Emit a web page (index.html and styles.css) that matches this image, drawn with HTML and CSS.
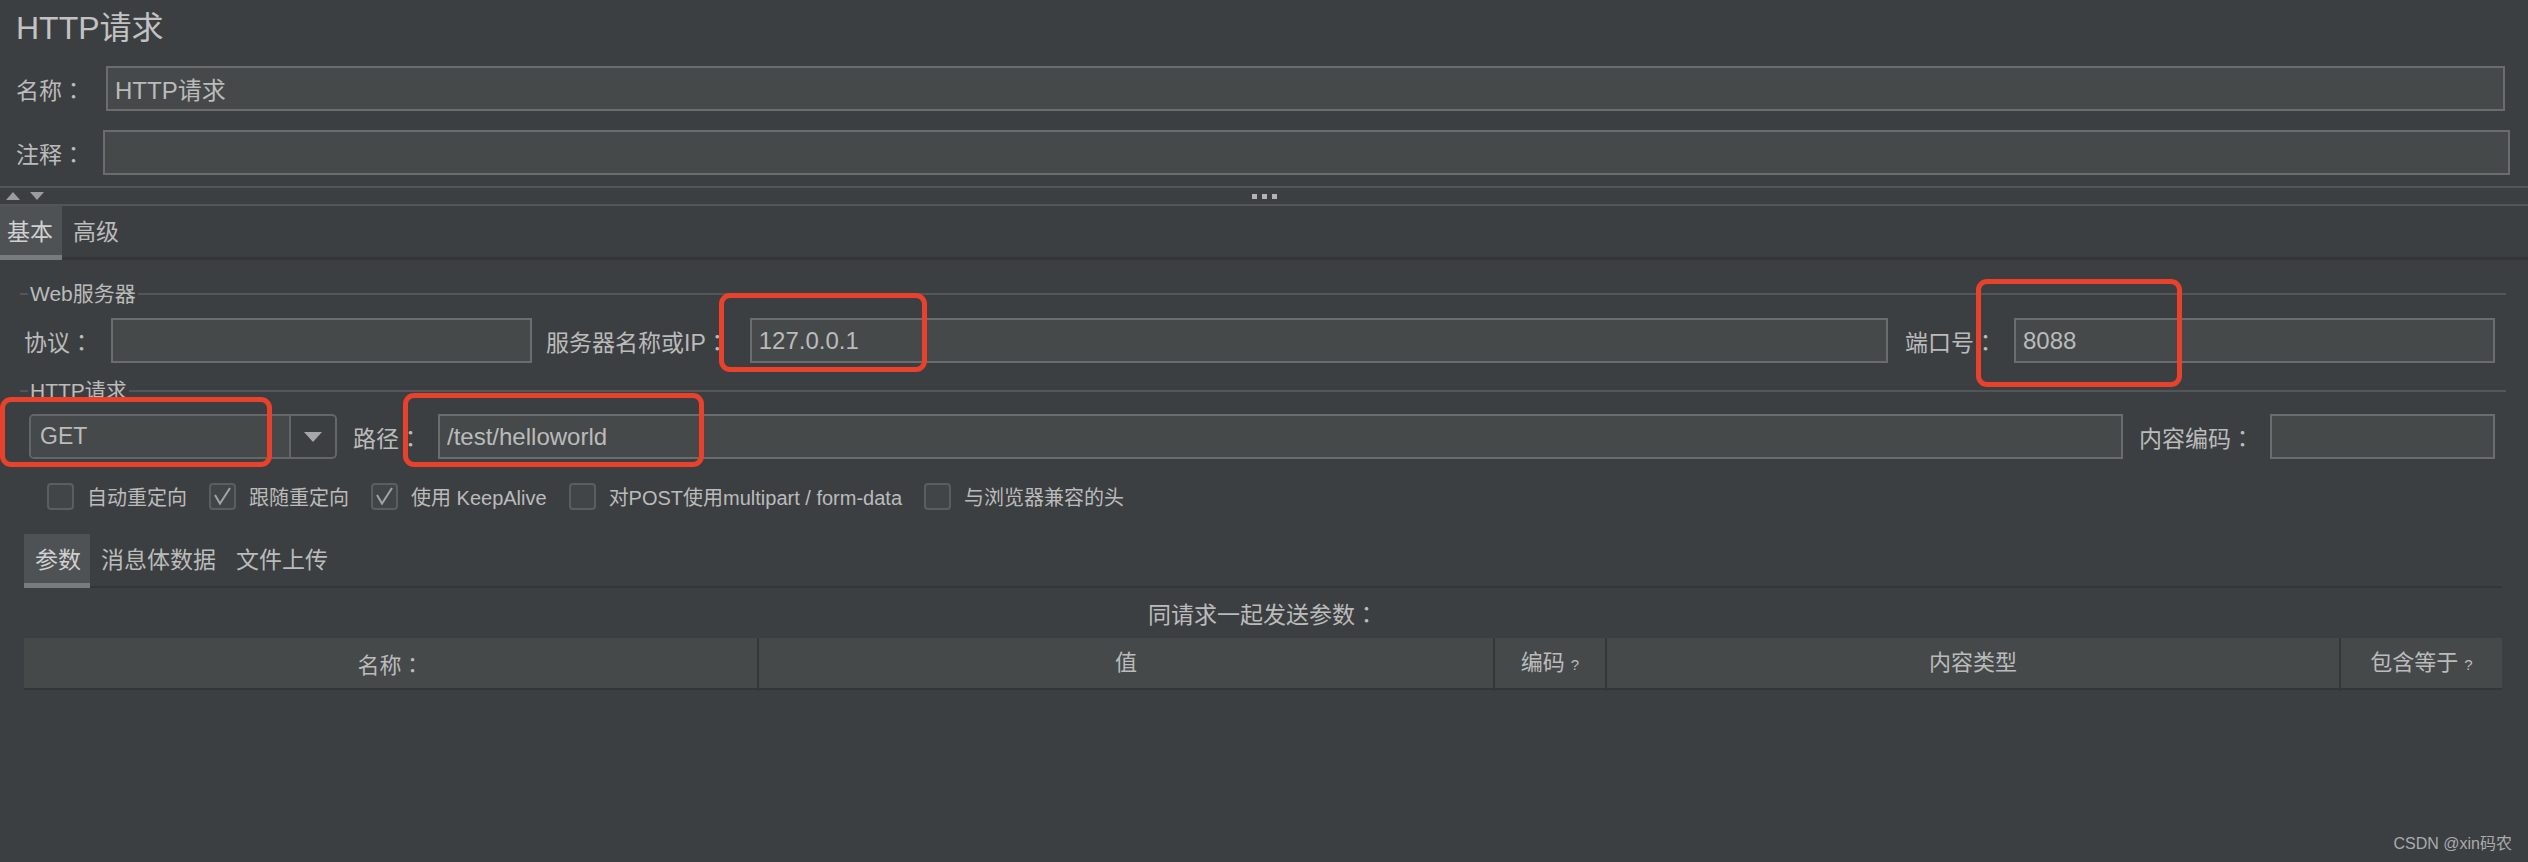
FILE: index.html
```html
<!DOCTYPE html>
<html lang="zh-CN">
  <head>
    <meta charset="UTF-8" />
    <meta name="viewport" content="width=device-width, initial-scale=1.0" />
    <title>HTTP请求</title>
    <link rel="stylesheet" href="styles.css">
  </head>

  <body>
    <div class="page">
      <h1 class="title">HTTP请求</h1>

      <div class="field-row name-row">
        <label class="lbl">名称<span class="colon" lang="zh-TW">：</span></label>
        <input class="input" type="text" value="HTTP请求" />
      </div>
      <div class="field-row comment-row">
        <label class="lbl">注释<span class="colon" lang="zh-TW">：</span></label>
        <input class="input" type="text" value="" />
      </div>

      <div class="splitter">
        <svg class="arrows" width="40" height="8" viewBox="0 0 40 8">
          <polygon points="0,8 7,0 14,8" />
          <polygon points="24,0 38,0 31,8" />
        </svg>
        <span class="grip"><i></i><i></i><i></i></span>
        <span></span>
      </div>

      <div class="tabs top-tabs">
        <span class="tab active">基本</span>
        <span class="tab">高级</span>
      </div>

      <div class="basic">
        <fieldset class="group web-group">
          <legend>Web服务器</legend>
          <div class="row server-row">
            <label class="lbl">协议<span class="colon" lang="zh-TW">：</span></label>
            <input class="input protocol" type="text" value="" />
            <label class="lbl gap-l">服务器名称或IP<span class="colon" lang="zh-TW">：</span></label>
            <input class="input grow" type="text" value="127.0.0.1" />
            <label class="lbl gap-l2">端口号<span class="colon" lang="zh-TW">：</span></label>
            <input class="input port" type="text" value="8088" />
          </div>
        </fieldset>

        <fieldset class="group http-group">
          <legend>HTTP请求</legend>
          <div class="row method-row">
            <div class="combo">
              <span class="combo-value">GET</span>
              <span class="combo-btn">
                <svg width="18" height="10" viewBox="0 0 18 10"><polygon points="0,0 18,0 9,10" /></svg>
              </span>
            </div>
            <label class="lbl gap-m">路径<span class="colon" lang="zh-TW">：</span></label>
            <input class="input grow" type="text" value="/test/helloworld" />
            <label class="lbl gap-m">内容编码<span class="colon" lang="zh-TW">：</span></label>
            <input class="input encoding" type="text" value="" />
          </div>

          <div class="checks">
            <span class="check-item"><span class="box"></span>自动重定向</span>
            <span class="check-item"><span class="box checked"><svg width="27" height="27" viewBox="0 0 27 27"><polyline points="6,12 11,20.5 21,5" /></svg></span>跟随重定向</span>
            <span class="check-item"><span class="box checked"><svg width="27" height="27" viewBox="0 0 27 27"><polyline points="6,12 11,20.5 21,5" /></svg></span>使用 KeepAlive</span>
            <span class="check-item"><span class="box"></span>对POST使用multipart / form-data</span>
            <span class="check-item"><span class="box"></span>与浏览器兼容的头</span>
          </div>

          <div class="tabs sub-tabs">
            <span class="tab active">参数</span>
            <span class="tab">消息体数据</span>
            <span class="tab">文件上传</span>
          </div>

          <div class="params-title">同请求一起发送参数<span class="colon" lang="zh-TW">：</span></div>

          <div class="params-head">
            <span class="col">名称<span class="colon" lang="zh-TW">：</span></span>
            <span class="col">值</span>
            <span class="col">编码<small>?</small></span>
            <span class="col">内容类型</span>
            <span class="col">包含等于<small>?</small></span>
          </div>
        </fieldset>
      </div>

      <!-- annotation marks drawn over the form -->
      <div class="mark mark-method"></div>
      <div class="mark mark-path"></div>
      <div class="mark mark-ip"></div>
      <div class="mark mark-port"></div>

      <div class="watermark">CSDN @xin码农</div>
    </div>
  </body>
</html>
```

FILE: styles.css
```css
body {
  margin: 0;
  background-color: #3c3f41;
  overflow: hidden;
}

.page {
  position: relative;
  height: 862px;
  color: #bbbbbb;
  font-family: "Liberation Sans", "Noto Sans CJK SC", sans-serif;
  font-size: 23px;
}

/* full-width colon drawn centred in its cell */
.colon {
  font-family: "Noto Sans CJK TC", "Noto Sans CJK SC", sans-serif;
}

.title {
  margin: 0;
  padding-left: 16px;
  height: 56px;
  line-height: 56px;
  font-size: 32px;
  font-weight: normal;
  color: #c2c2c2;
}

/* text boxes */
.input {
  box-sizing: border-box;
  height: 45px;
  margin: 0;
  padding: 0 7px;
  border: 2px solid #6a6c6e;
  background-color: #45494a;
  color: #bbbbbb;
  font-family: inherit;
  font-size: 24px;
  outline: none;
  min-width: 0;
}

.lbl {
  white-space: nowrap;
  flex: none;
}

.field-row {
  display: flex;
  align-items: center;
  padding-left: 16px;
}

.field-row .input {
  flex: 1;
}

.name-row {
  margin-top: 10px;
  padding-right: 23px;
}

.name-row .lbl {
  width: 90px;
}

.comment-row {
  margin-top: 19px;
  padding-right: 18px;
}

.comment-row .lbl {
  width: 87px;
}

/* split handle */
.splitter {
  display: grid;
  grid-template-columns: 1fr auto 1fr;
  align-items: center;
  margin-top: 11px;
  height: 16px;
  border-top: 2px solid #535557;
  border-bottom: 2px solid #535557;
}

.arrows {
  display: block;
  margin-left: 6px;
  fill: #9a9c9e;
}

.grip {
  display: flex;
  gap: 5px;
}

.grip i {
  width: 5px;
  height: 5px;
  background-color: #b3b3b3;
}

/* tabs */
.tabs {
  display: flex;
  align-items: flex-start;
  box-sizing: border-box;
  height: 54px;
}

.top-tabs {
  gap: 4px;
  border-bottom: 3px solid #333537;
}

.tab {
  box-sizing: border-box;
  height: 51px;
  padding: 3px 9px 0 7px;
  line-height: 46px;
  white-space: nowrap;
}

.tab.active {
  height: 54px;
  background-color: #4e5254;
  border-bottom: 5px solid #787b7e;
  color: #d0d0d0;
}

.top-tabs .tab.active {
  margin-bottom: -3px;
}

/* basic panel */
.basic {
  padding: 0 22px 0 20px;
}

.group {
  margin: 20px 0 0;
  padding: 0;
  border: 0;
  border-top: 2px solid #535557;
  min-width: 0;
}

.http-group {
  margin-top: 14px;
}

.group legend {
  margin-left: 8px;
  padding: 0 2px;
  font-size: 21px;
  line-height: 28px;
}

.row {
  display: flex;
  align-items: center;
  padding-right: 11px;
}

.row .grow {
  flex: 1;
}

.server-row {
  margin-top: 10px;
  padding-left: 4px;
}

.server-row .lbl {
  margin-right: 18px;
}

.server-row .gap-l {
  margin-left: 14px;
  margin-right: 21px;
}

.server-row .gap-l2 {
  margin-left: 17px;
  margin-right: 17px;
}

.protocol {
  width: 421px;
}

.port {
  width: 481px;
}

.method-row {
  margin-top: 9px;
  padding-left: 9px;
}

.gap-m {
  margin-left: 16px;
  margin-right: 16px;
}

.encoding {
  width: 225px;
}

.combo {
  display: flex;
  box-sizing: border-box;
  width: 308px;
  height: 45px;
  border: 2px solid #646668;
  border-radius: 5px;
  overflow: hidden;
  flex: none;
}

.combo-value {
  flex: 1;
  padding-left: 9px;
  line-height: 41px;
  background-color: #45494a;
  border-right: 2px solid #646668;
}

.combo-btn {
  display: flex;
  align-items: center;
  justify-content: center;
  width: 44px;
  fill: #a5a7a9;
}

/* checkboxes */
.checks {
  display: flex;
  align-items: center;
  gap: 22px;
  margin-top: 23px;
  padding-left: 27px;
  font-size: 20px;
}

.check-item {
  display: flex;
  align-items: center;
  gap: 13px;
  white-space: nowrap;
}

.box {
  box-sizing: border-box;
  width: 27px;
  height: 27px;
  border: 2px solid #5b5e60;
  border-radius: 4px;
  background-color: #424548;
}

.box svg {
  display: block;
  margin: -2px;
  fill: none;
  stroke: #a0a2a4;
  stroke-width: 2;
}

/* parameter tabs and table */
.sub-tabs {
  margin: 23px 4px 0;
  border-bottom: 2px solid #333537;
}

.sub-tabs .tab {
  padding: 3px 9px 0 11px;
}

.sub-tabs .tab.active {
  margin-bottom: -2px;
}

.params-title {
  margin: 0 4px;
  height: 50px;
  line-height: 50px;
  text-align: center;
}

.params-head {
  display: grid;
  grid-template-columns: 735px 736px 112px 734px 1fr;
  margin: 0 4px;
  height: 52px;
  box-sizing: border-box;
  background-color: #45494a;
  border-bottom: 2px solid #333537;
  font-size: 22px;
}

.params-head .col {
  line-height: 50px;
  text-align: center;
  border-right: 2px solid #333537;
}

.params-head .col:last-child {
  border-right: 0;
}

.params-head small {
  margin-left: 6px;
  font-size: 15px;
}

/* red annotations */
.mark {
  position: absolute;
  box-sizing: border-box;
  border: 5px solid #e8412c;
  border-radius: 11px;
}

.mark-method {
  left: 0;
  top: 397px;
  width: 272px;
  height: 70px;
}

.mark-path {
  left: 403px;
  top: 393px;
  width: 301px;
  height: 74px;
}

.mark-ip {
  left: 719px;
  top: 293px;
  width: 208px;
  height: 79px;
}

.mark-port {
  left: 1976px;
  top: 279px;
  width: 206px;
  height: 108px;
}

.watermark {
  position: absolute;
  right: 16px;
  bottom: 8px;
  font-size: 16px;
  color: #a9abad;
}
```
